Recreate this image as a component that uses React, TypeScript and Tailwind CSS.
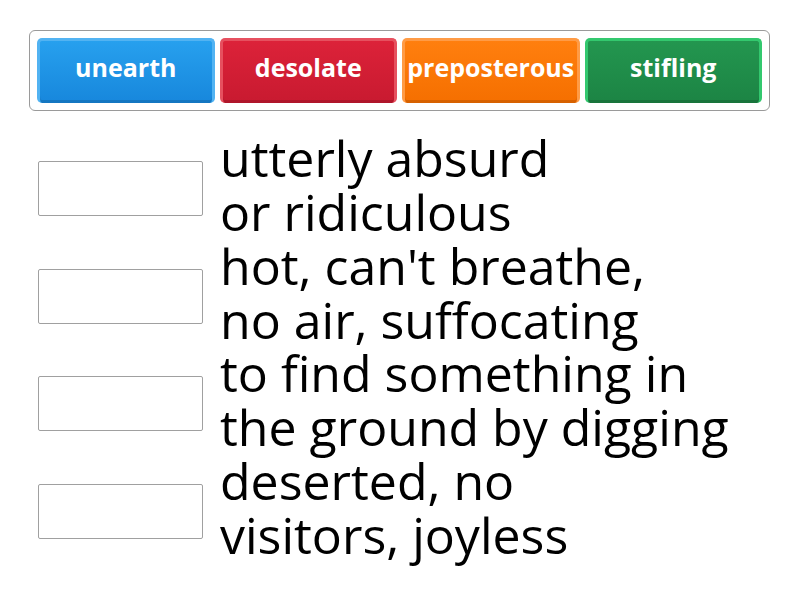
import React from 'react';

const words = [
  { label: 'unearth', cls: 'border-[#52b3f2] from-[#27a0ee] to-[#1787dc]' },
  { label: 'desolate', cls: 'border-[#e6505f] from-[#dc2239] to-[#c81a30]' },
  { label: 'preposterous', cls: 'border-[#ff9b45] from-[#ff7f0e] to-[#f56f00]' },
  { label: 'stifling', cls: 'border-[#33c86e] from-[#23964f] to-[#1c8444]' },
];

const definitions = [
  ['utterly absurd', 'or ridiculous'],
  ["hot, can't breathe,", 'no air, suffocating'],
  ['to find something in', 'the ground by digging'],
  ['deserted, no', 'visitors, joyless'],
];

export default function App() {
  return (
    <div
      className="w-[800px] h-[600px] bg-white overflow-hidden"
      style={{ fontFamily: '"Open Sans", "Noto Sans", sans-serif' }}
    >
      {/* Banque de mots */}
      <div className="ml-[29px] mt-[30px] w-[741px] h-[81px] border border-[#9a9a9a] rounded-[6px] flex items-center gap-[5px] px-[7px]">
        {words.map((w) => (
          <div
            key={w.label}
            className={`w-[178px] h-[65px] rounded-[5px] border-[3px] border-b-0 bg-linear-to-b ${w.cls} shadow-[inset_0_-3px_0_rgba(0,0,0,0.12)] flex items-center justify-center pb-[8px] text-white text-[25px] font-bold`}
          >
            {w.label}
          </div>
        ))}
      </div>

      {/* Définitions */}
      <div className="mt-[20px] flex flex-col">
        {definitions.map((d, i) => (
          <div key={i} className="flex items-start h-[107.7px]">
            <div className="ml-[38px] mt-[30px] w-[165px] h-[55px] border border-[#a0a0a0] rounded-[2px] bg-white" />
            <div className="ml-[17px] text-[50px] leading-[54px] text-black">
              <div>{d[0]}</div>
              <div>{d[1]}</div>
            </div>
          </div>
        ))}
      </div>
    </div>
  );
}
